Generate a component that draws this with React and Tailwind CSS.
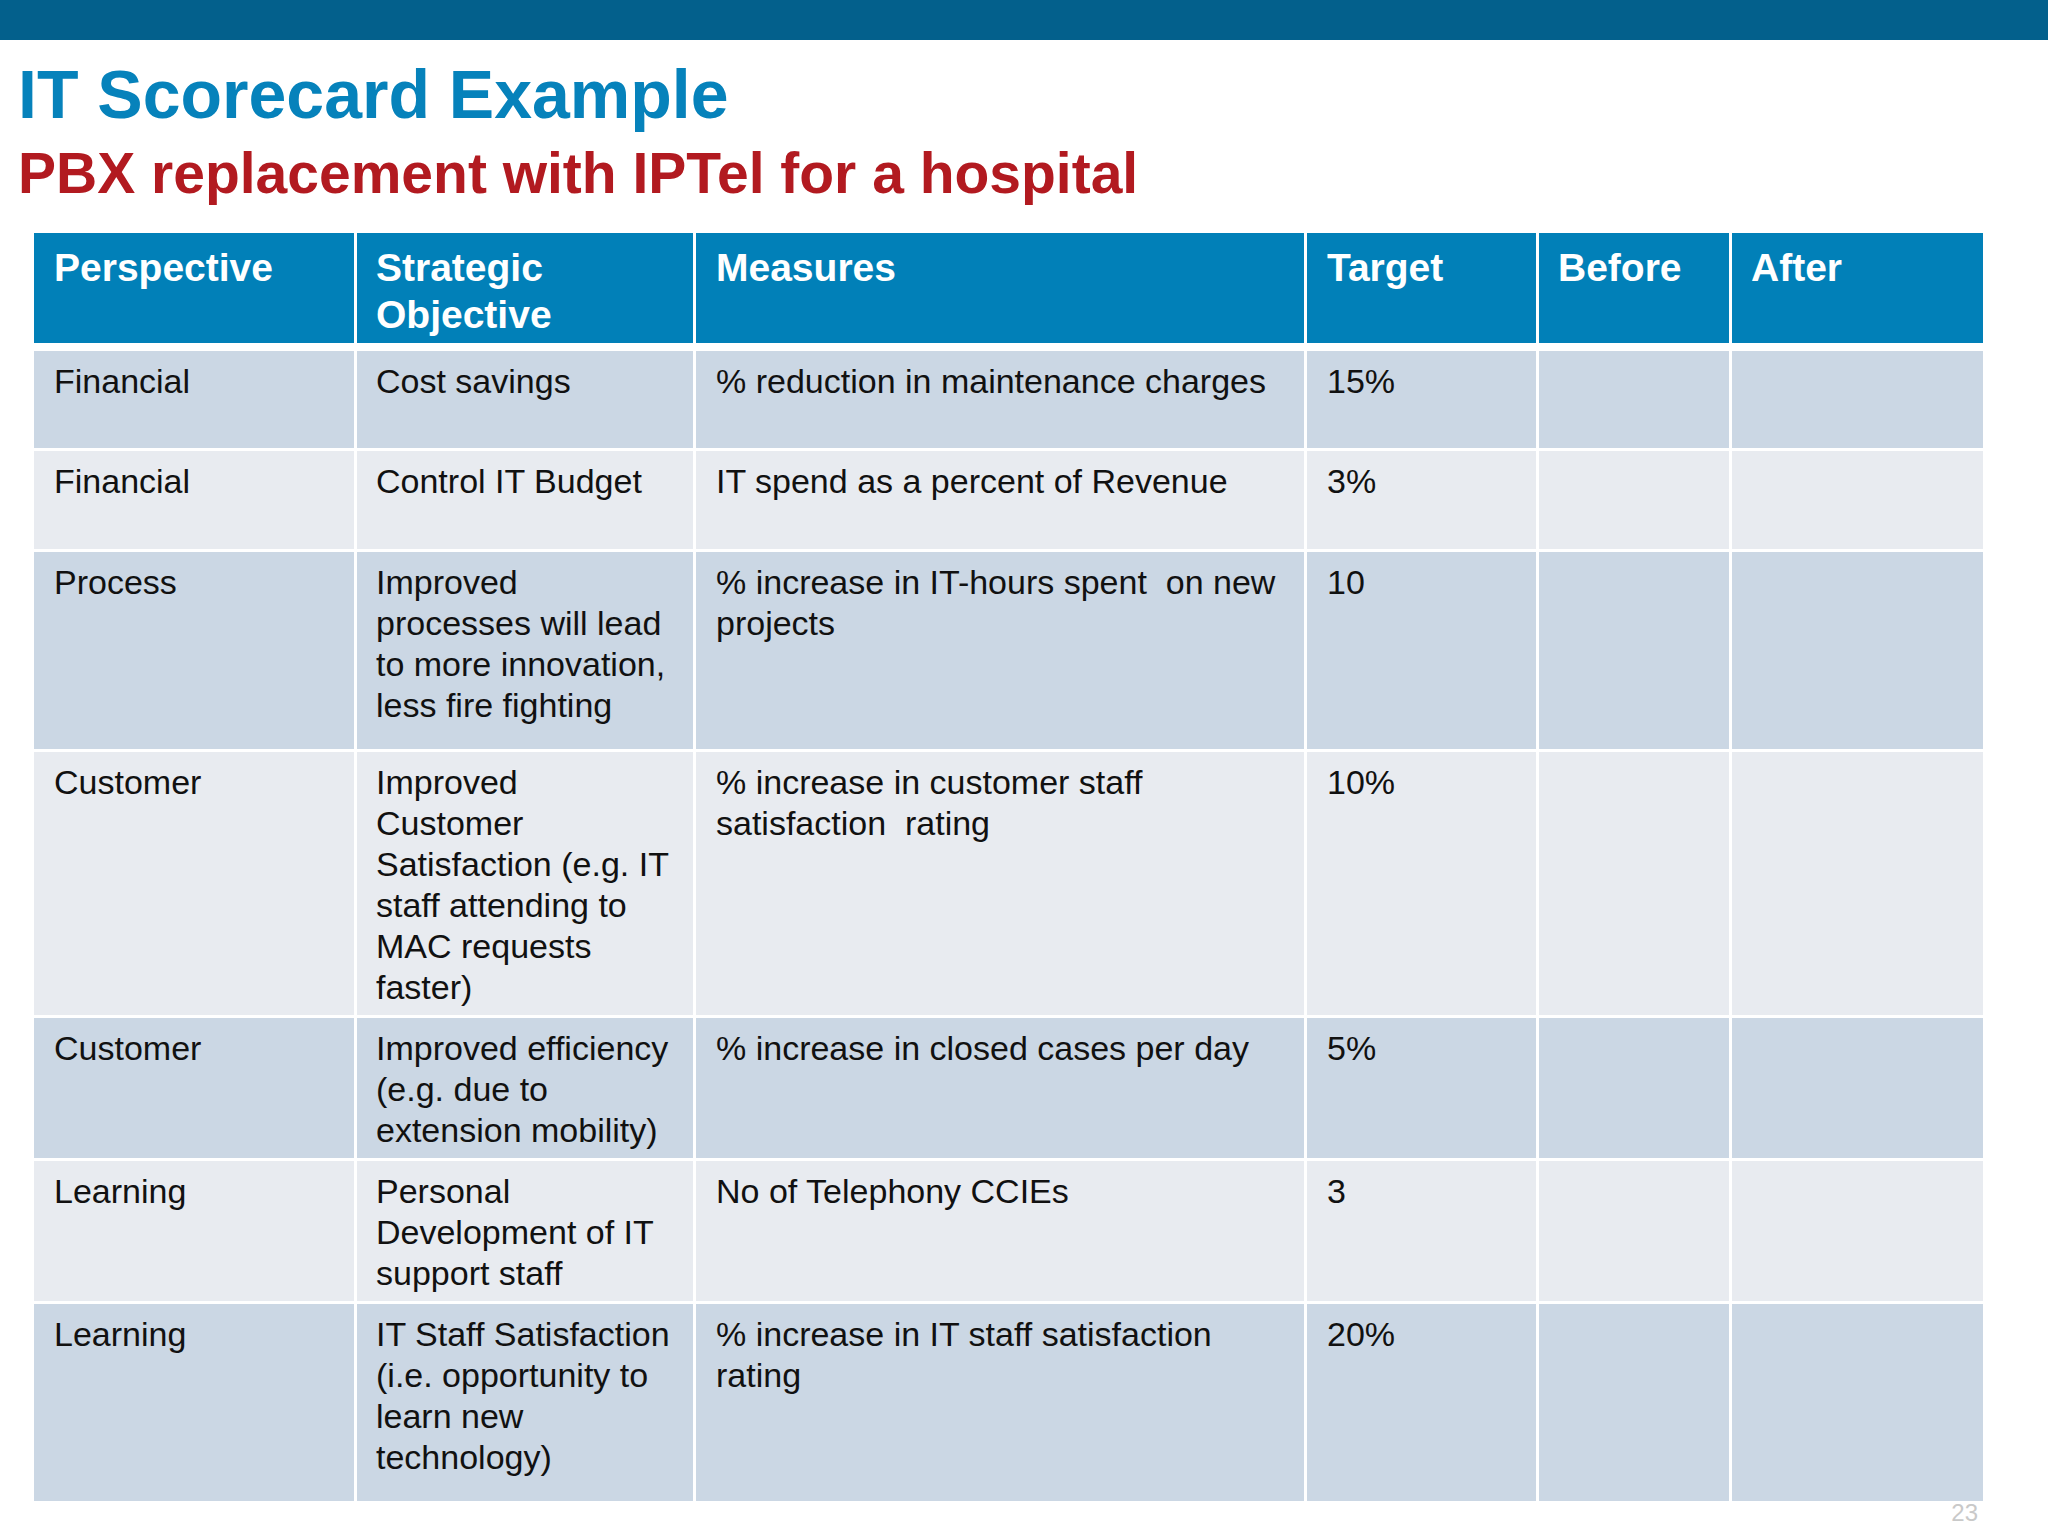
import React from "react";

const rows = [
  { perspective: "Financial", objective: ["Cost savings"], measure: ["% reduction in maintenance charges"], target: "15%", h: "h-[97px]", bg: "bg-[#cbd7e4]" },
  { perspective: "Financial", objective: ["Control IT Budget"], measure: ["IT spend as a percent of Revenue"], target: "3%", h: "h-[98px]", bg: "bg-[#e8ebf0]" },
  {
    perspective: "Process",
    objective: ["Improved", "processes will lead", "to more innovation,", "less fire fighting"],
    measure: ["% increase in IT-hours spent  on new", "projects"],
    target: "10",
    h: "h-[197px]",
    bg: "bg-[#cbd7e4]",
  },
  {
    perspective: "Customer",
    objective: ["Improved", "Customer", "Satisfaction (e.g. IT", "staff attending to", "MAC requests", "faster)"],
    measure: ["% increase in customer staff", "satisfaction  rating"],
    target: "10%",
    h: "h-[263px]",
    bg: "bg-[#e8ebf0]",
  },
  {
    perspective: "Customer",
    objective: ["Improved efficiency", "(e.g. due to", "extension mobility)"],
    measure: ["% increase in closed cases per day"],
    target: "5%",
    h: "h-[140px]",
    bg: "bg-[#cbd7e4]",
  },
  {
    perspective: "Learning",
    objective: ["Personal", "Development of IT", "support staff"],
    measure: ["No of Telephony CCIEs"],
    target: "3",
    h: "h-[140px]",
    bg: "bg-[#e8ebf0]",
  },
  {
    perspective: "Learning",
    objective: ["IT Staff Satisfaction", "(i.e. opportunity to", "learn new", "technology)"],
    measure: ["% increase in IT staff satisfaction", "rating"],
    target: "20%",
    h: "h-[197px]",
    bg: "bg-[#cbd7e4]",
  },
];

const cols = "grid grid-cols-[320px_336px_608px_229px_190px_251px] gap-x-[3px]";

function Lines({ lines }) {
  return (
    <>
      {lines.map((l, i) => (
        <div key={i} className="whitespace-pre">
          {l}
        </div>
      ))}
    </>
  );
}

export default function App() {
  return (
    <div className="w-[2048px] h-[1536px] bg-white overflow-hidden font-['Liberation_Sans',Arial,sans-serif]">
      <div className="h-[40px] bg-[#03608c]" />
      <div className="pl-[18px]">
        <h1 className="mt-[20px] text-[68px] leading-none font-bold text-[#0682bb]">IT Scorecard Example</h1>
        <h2 className="mt-[17px] text-[57px] leading-none font-bold text-[#b21a20]">
          PBX replacement with IPTel for a hospital
        </h2>
      </div>

      <div className="ml-[34px] mt-[31px] w-[1949px]">
        <div className={`${cols} h-[110px] text-white font-bold text-[39px] leading-[47px]`}>
          <div className="bg-[#0180b8] pl-[20px] pt-[11px]">Perspective</div>
          <div className="bg-[#0180b8] pl-[19px] pt-[11px]">
            Strategic
            <br />
            Objective
          </div>
          <div className="bg-[#0180b8] pl-[20px] pt-[11px]">Measures</div>
          <div className="bg-[#0180b8] pl-[20px] pt-[11px]">Target</div>
          <div className="bg-[#0180b8] pl-[19px] pt-[11px]">Before</div>
          <div className="bg-[#0180b8] pl-[19px] pt-[11px]">After</div>
        </div>

        <div className="mt-[8px] flex flex-col gap-y-[3px] text-[34px] leading-[41px] text-[#111111]">
          {rows.map((r, i) => (
            <div key={i} className={`${cols} ${r.h}`}>
              <div className={`${r.bg} pl-[20px] pt-[10px]`}>{r.perspective}</div>
              <div className={`${r.bg} pl-[19px] pt-[10px]`}>
                <Lines lines={r.objective} />
              </div>
              <div className={`${r.bg} pl-[20px] pt-[10px]`}>
                <Lines lines={r.measure} />
              </div>
              <div className={`${r.bg} pl-[20px] pt-[10px]`}>{r.target}</div>
              <div className={r.bg} />
              <div className={r.bg} />
            </div>
          ))}
        </div>

        <div className="flex justify-end pr-[5px] text-[24px] leading-none text-[#c9c9c9]">23</div>
      </div>
    </div>
  );
}
